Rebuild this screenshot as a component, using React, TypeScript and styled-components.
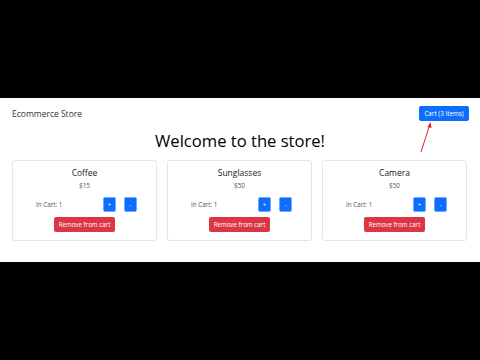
import React from "react";
import styled, { createGlobalStyle } from "styled-components";

const Global = createGlobalStyle`
  html, body { margin: 0; padding: 0; background: #000; }
  body { font-family: "Open Sans", "Noto Sans", sans-serif; }
  * { box-sizing: border-box; }
`;

const Frame = styled.div`
  width: 480px;
  height: 360px;
  background: #000;
  padding-top: 98px;
  position: relative;
  overflow: hidden;
`;

const Page = styled.div`
  background: #fff;
  height: 164px;
  display: flex;
  flex-direction: column;
`;

const Nav = styled.div`
  height: 30px;
  display: flex;
  align-items: center;
  justify-content: space-between;
  padding: 0 11px 0 12px;
`;

const Brand = styled.span`
  font-size: 8.5px;
  color: #333;
`;

const CartButton = styled.button`
  background: #0d6efd;
  color: #fff;
  border: none;
  border-radius: 2px;
  height: 15px;
  width: 50px;
  padding: 0;
  font-family: inherit;
  font-size: 6.3px;
  display: flex;
  align-items: center;
  justify-content: center;
`;

const Heading = styled.h1`
  margin: 0;
  height: 32px;
  line-height: 26px;
  text-align: center;
  font-weight: 400;
  font-size: 16.6px;
  color: #000;
`;

const Grid = styled.div`
  display: grid;
  grid-template-columns: repeat(3, 145px);
  gap: 10px;
  padding: 0 11px 0 12px;
`;

const Card = styled.div`
  border: 1px solid #e3e5e8;
  border-radius: 3px;
  height: 81px;
  display: flex;
  flex-direction: column;
  align-items: center;
  padding-top: 6px;
`;

const Title = styled.div`
  font-size: 8.5px;
  color: #222;
  line-height: 12px;
`;

const Price = styled.div`
  font-size: 6.5px;
  color: #555;
  line-height: 10px;
  margin-top: 2px;
`;

const Row = styled.div`
  align-self: stretch;
  display: flex;
  align-items: center;
  justify-content: space-between;
  padding: 0 19px 0 23px;
  margin-top: 6px;
`;

const Count = styled.span`
  font-size: 6.3px;
  color: #555;
`;

const Controls = styled.div`
  display: flex;
  gap: 8px;
`;

const Small = styled.button`
  width: 13px;
  height: 15px;
  background: #0d6efd;
  border: 1px solid #6ea8fe;
  border-radius: 2px;
  color: #fff;
  font-family: inherit;
  font-size: 6px;
  padding: 0;
  display: flex;
  align-items: center;
  justify-content: center;
`;

const Remove = styled.button`
  margin-top: 5px;
  height: 15px;
  padding: 0 5px;
  background: #dc3545;
  border: none;
  border-radius: 2px;
  color: #fff;
  font-family: inherit;
  font-size: 6.2px;
`;

const Arrow = styled.svg`
  position: absolute;
  left: 415px;
  top: 118px;
`;

const products = [
  { name: "Coffee", price: "$15" },
  { name: "Sunglasses", price: "$50" },
  { name: "Camera", price: "$50" },
];

export default function App() {
  return (
    <>
      <Global />
      <Frame>
        <Page>
          <Nav>
            <Brand>Ecommerce Store</Brand>
            <CartButton>Cart (3 Items)</CartButton>
          </Nav>
          <Heading>Welcome to the store!</Heading>
          <Grid>
            {products.map((p) => (
              <Card key={p.name}>
                <Title>{p.name}</Title>
                <Price>{p.price}</Price>
                <Row>
                  <Count>In Cart: 1</Count>
                  <Controls>
                    <Small>+</Small>
                    <Small>-</Small>
                  </Controls>
                </Row>
                <Remove>Remove from cart</Remove>
              </Card>
            ))}
          </Grid>
        </Page>
        <Arrow width="20" height="40" viewBox="0 0 20 40">
          <line x1="6" y1="34" x2="15" y2="6" stroke="#e02020" strokeWidth="1" />
          <polygon points="15.5,4 16.5,10 12.5,9" fill="#e02020" />
        </Arrow>
      </Frame>
    </>
  );
}
